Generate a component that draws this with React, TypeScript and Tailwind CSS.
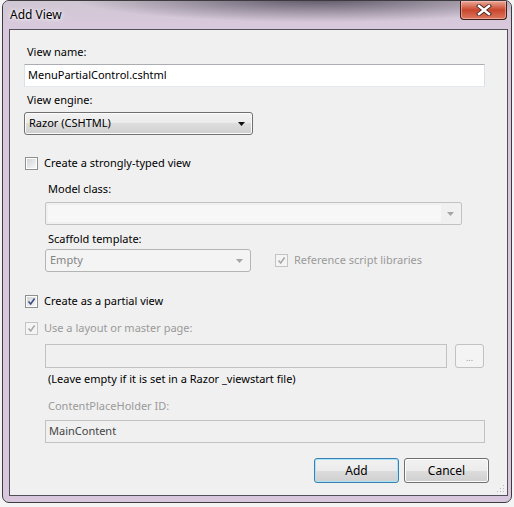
import React from "react";

const font = "font-['Segoe_UI','Noto_Sans',sans-serif] text-[11px]";

const Arrow = ({disabled = false}: {disabled?: boolean}) => (
    <svg width="7" height="4" viewBox="0 0 7 4" className="shrink-0">
        <path d="M0 0 L7 0 L3.5 4 Z" fill={disabled ? "#a5a5a5" : "#111"}/>
    </svg>
);

const Check = ({checked, disabled = false}: {checked: boolean; disabled?: boolean}) => (
    <div
        className={`w-[13px] h-[13px] shrink-0 border p-px ${disabled ? "border-[#c4c4c4] bg-[#f4f4f4]" : "border-[#8e8f8f] bg-white"}`}
    >
        <div
            className={`w-full h-full flex items-center justify-center ${disabled ? "bg-[#f4f4f4]" : "bg-gradient-to-br from-[#d2d4d8] to-[#f7f7f7]"}`}
        >
            {checked && (
                <svg width="9" height="9" viewBox="0 0 9 9">
                    <path
                        d="M1.5 4.5 L3.7 7 L7.6 1.5"
                        fill="none"
                        stroke={disabled ? "#a9a9a9" : "#3e4f85"}
                        strokeWidth="1.6"
                    />
                </svg>
            )}
        </div>
    </div>
);

const Label = ({children, className = ""}: {children: React.ReactNode; className?: string}) => (
    <div className={`leading-4 h-4 ${className}`}>{children}</div>
);

const CloseButton = () => (
    <div className="w-[47px] h-[19px] rounded-b-[4px] border border-t-0 border-[#3b1e1a] bg-gradient-to-b from-[#eaa898] via-[#c9452c] to-[#dc7760] flex items-center justify-center shadow-[inset_0_0_0_1px_rgba(255,210,200,0.5)]">
        <svg width="16" height="12" viewBox="0 0 16 12">
            <path d="M3 2 L13 10 M13 2 L3 10" stroke="#4a2a28" strokeWidth="4.2" strokeLinecap="square"/>
            <path d="M3 2 L13 10 M13 2 L3 10" stroke="#ffffff" strokeWidth="2.4" strokeLinecap="square"/>
        </svg>
    </div>
);

const Button = ({children, focused = false}: {children: React.ReactNode; focused?: boolean}) => (
    <div
        className={`w-[85px] h-[25px] rounded-[3px] border flex items-center justify-center text-[12px] text-black ${focused ? "border-[#3c7fb1] shadow-[inset_0_0_0_1px_#a9e3f7]" : "border-[#707070] shadow-[inset_0_0_0_1px_#fcfcfc]"} bg-[linear-gradient(to_bottom,#f2f2f2_0%,#ebebeb_50%,#dddddd_50%,#cfcfcf_100%)]`}
    >
        {children}
    </div>
);

export default function App() {
    return (
        <div className={`w-[514px] h-[507px] bg-[#f4f4f4] overflow-hidden ${font}`}>
            <div className="ml-[2px] w-[510px] h-[503px] rounded-[7px] border border-[#3d3a40] overflow-hidden flex flex-col bg-[#d9c8dd]">
                {/* title bar */}
                <div className="h-[28px] shrink-0 flex items-start justify-between bg-[radial-gradient(ellipse_at_62%_-10%,rgba(70,62,78,0.85),rgba(70,62,78,0)_55%),linear-gradient(to_bottom,#cfc7d3,#d9c9dd)]">
                    <div className="pl-[7px] pt-[6px] leading-4 text-[12px] text-black [text-shadow:0_0_6px_#fff,0_0_3px_#fff]">
                        Add View
                    </div>
                    <div className="mr-[4px]">
                        <CloseButton/>
                    </div>
                </div>

                {/* client area */}
                <div className="ml-[6px] mr-[3px] mb-[6px] flex-1 border border-[#53505a] bg-[#f0f0f0] flex flex-col text-black">
                    <Label className="mt-[14px] ml-[17px]">View name:</Label>
                    <div className="mt-[4px] ml-[14px] w-[461px] h-[23px] border border-[#abadb3] border-b-[#e3e9ef] border-x-[#dbdfe6] bg-white flex items-center pl-[3px]">
                        MenuPartialControl.cshtml
                    </div>

                    <Label className="mt-[5px] ml-[17px]">View engine:</Label>
                    <div className="mt-[4px] ml-[14px] w-[229px] h-[23px] rounded-[3px] border border-[#707070] shadow-[inset_0_0_0_1px_#fcfcfc] bg-[linear-gradient(to_bottom,#f2f2f2_0%,#ebebeb_50%,#dddddd_50%,#cfcfcf_100%)] flex items-center justify-between pl-[4px] pr-[7px]">
                        <span>Razor (CSHTML)</span>
                        <Arrow/>
                    </div>

                    <div className="mt-[20px] ml-[15px] h-4 flex items-center gap-[6px]">
                        <Check checked={false}/>
                        <span>Create a strongly-typed view</span>
                    </div>

                    <Label className="mt-[10px] ml-[38px]">Model class:</Label>
                    <div className="mt-[5px] ml-[35px] w-[417px] h-[23px] rounded-[2px] border border-[#c2c2c2] bg-[#f0f0f0] flex items-center p-[2px]">
                        <div className="flex-1 h-full bg-[#f7f7f7]"/>
                        <div className="w-[18px] flex items-center justify-center">
                            <Arrow disabled/>
                        </div>
                    </div>

                    <Label className="mt-[6px] ml-[38px]">Scaffold template:</Label>
                    <div className="mt-[2px] ml-[35px] flex items-center">
                        <div className="w-[206px] h-[23px] rounded-[3px] border border-[#b4b4b4] bg-[#f4f4f4] flex items-center justify-between pl-[4px] pr-[7px] text-[#858585]">
                            <span>Empty</span>
                            <Arrow disabled/>
                        </div>
                        <div className="ml-[24px] flex items-center gap-[6px] text-[#9a9a9a]">
                            <Check checked disabled/>
                            <span>Reference script libraries</span>
                        </div>
                    </div>

                    <div className="mt-[21px] ml-[15px] h-4 flex items-center gap-[6px]">
                        <Check checked/>
                        <span>Create as a partial view</span>
                    </div>

                    <div className="mt-[11px] ml-[15px] h-4 flex items-center gap-[6px] text-[#9a9a9a]">
                        <Check checked disabled/>
                        <span>Use a layout or master page:</span>
                    </div>

                    <div className="mt-[8px] ml-[35px] flex items-center gap-[8px]">
                        <div className="w-[402px] h-[24px] border border-[#c2c2c2] bg-[#f0f0f0]"/>
                        <div className="w-[29px] h-[24px] rounded-[3px] border border-[#c2c2c2] bg-[#f4f4f4] flex items-center justify-center text-[9px] text-[#a0a0a0] leading-none pt-[3px]">
                            ...
                        </div>
                    </div>

                    <Label className="mt-[3px] ml-[38px]">(Leave empty if it is set in a Razor _viewstart file)</Label>

                    <Label className="mt-[11px] ml-[38px] text-[#9a9a9a]">ContentPlaceHolder ID:</Label>
                    <div className="mt-[6px] ml-[35px] w-[440px] h-[23px] border border-[#c2c2c2] bg-[#f0f0f0] flex items-center pl-[3px] text-[#444]">
                        MainContent
                    </div>

                    <div className="mt-[15px] mr-[18px] flex justify-end gap-[5px]">
                        <Button focused>Add</Button>
                        <Button>Cancel</Button>
                    </div>

                    <div className="mt-auto mb-[2px] mr-[2px] self-end">
                        <svg width="8" height="8" viewBox="0 0 8 8">
                            <rect x="6" y="0" width="1" height="1" fill="#b9b9b9"/>
                            <rect x="3" y="3" width="1" height="1" fill="#b9b9b9"/>
                            <rect x="6" y="3" width="1" height="1" fill="#b9b9b9"/>
                            <rect x="0" y="6" width="1" height="1" fill="#b9b9b9"/>
                            <rect x="3" y="6" width="1" height="1" fill="#b9b9b9"/>
                            <rect x="6" y="6" width="1" height="1" fill="#b9b9b9"/>
                        </svg>
                    </div>
                </div>
            </div>
        </div>
    );
}
